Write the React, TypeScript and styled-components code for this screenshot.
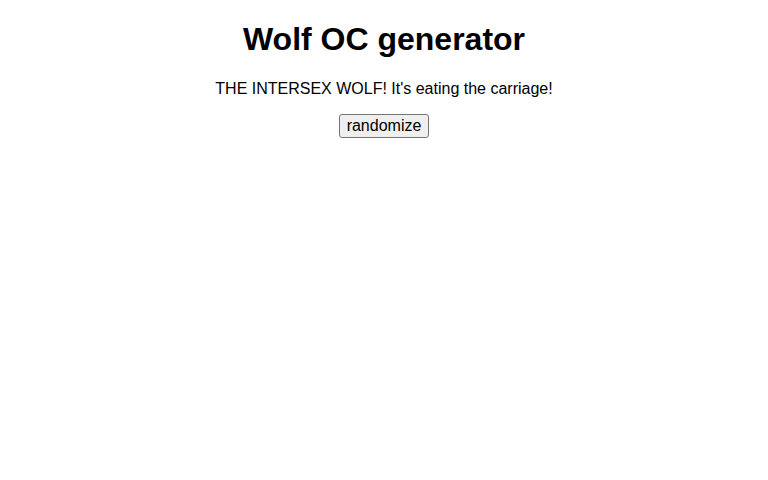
import React, { useState } from "react";
import styled, { createGlobalStyle } from "styled-components";

const GlobalStyle = createGlobalStyle`
  body {
    margin: 0 8px 8px;
    background: #ffffff;
    color: #000000;
    font-family: "Liberation Sans", Arial, sans-serif;
  }
`;

const Page = styled.main`
  text-align: center;
`;

const Title = styled.h1`
  font-size: 32px;
  font-weight: bold;
  margin: 21.44px 0;
`;

const Line = styled.p`
  font-size: 16px;
  margin: 16px 0;
`;

const RandomButton = styled.button`
  font-family: "Liberation Sans", Arial, sans-serif;
  font-size: 16px;
  color: #000000;
  background: #efefef;
  border: 1px solid #767676;
  border-radius: 3px;
  padding: 2px 7px;
  cursor: pointer;

  &:hover {
    background: #e5e5e5;
  }
`;

const subjects = [
  "THE INTERSEX WOLF!",
  "THE GHOST WOLF!",
  "THE TINY WOLF!",
  "THE SEVEN-LEGGED WOLF!",
];
const actions = [
  "It's eating the carriage!",
  "It's howling at the toaster!",
  "It's stealing the lanterns!",
  "It's chasing the mail cart!",
];

export default function App() {
  const [line, setLine] = useState(`${subjects[0]} ${actions[0]}`);

  const randomize = () => {
    const s = subjects[Math.floor(Math.random() * subjects.length)];
    const a = actions[Math.floor(Math.random() * actions.length)];
    setLine(`${s} ${a}`);
  };

  return (
    <>
      <GlobalStyle />
      <Page>
        <Title>Wolf OC generator</Title>
        <Line>{line}</Line>
        <RandomButton onClick={randomize}>randomize</RandomButton>
      </Page>
    </>
  );
}
